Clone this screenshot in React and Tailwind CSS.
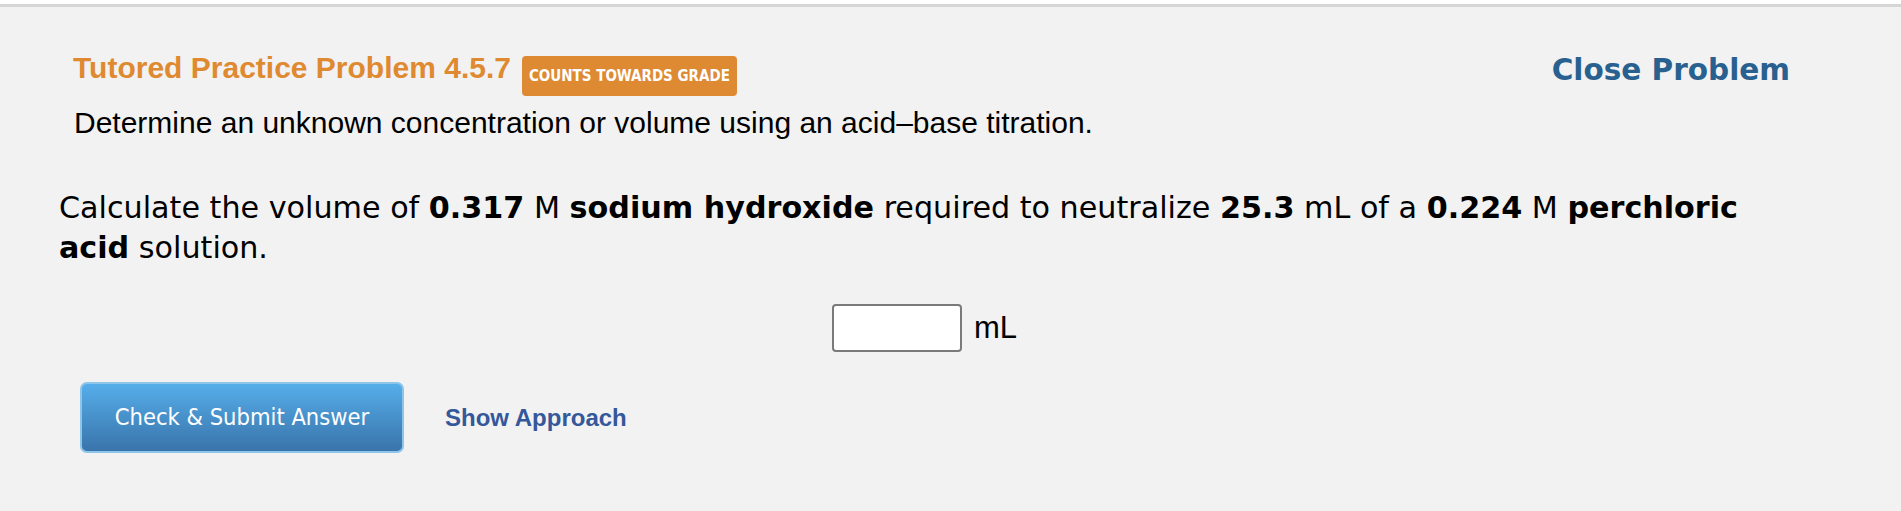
import React, { useState } from 'react';

// Tutored practice problem card (chemistry homework style)
export default function App() {
  const [answer, setAnswer] = useState('');

  return (
    <div className="min-h-[511px] bg-white pt-1">
      <div className="h-[507px] border-t-[3px] border-[#d6d6d6] bg-[#f2f2f2]">
        {/* header */}
        <div className="flex items-start justify-between pl-[73px] pr-[111px] pt-[43px]">
          <div>
            <div className="flex items-start">
              <h1 className="font-['Liberation_Sans',Arial,sans-serif] text-[30px] font-bold leading-[36px] text-[#df8a30]">
                Tutored Practice Problem 4.5.7
              </h1>
              <span className="ml-[11px] mt-[6px] flex h-[40px] items-center rounded-[4px] bg-[#de8a33] px-[7px] font-['DejaVu_Sans_Condensed','DejaVu_Sans',sans-serif] text-[15px] font-bold text-white">
                COUNTS TOWARDS GRADE
              </span>
            </div>
            <p className="mt-[9px] pl-[1px] font-['Liberation_Sans',Arial,sans-serif] text-[30px] leading-[36px] text-black">
              Determine an unknown concentration or volume using an acid–base titration.
            </p>
          </div>
          <a href="#" className="mt-[2px] font-['DejaVu_Sans',Verdana,sans-serif] text-[29.5px] font-bold leading-[36px] text-[#28608f]">
            Close Problem
          </a>
        </div>

        {/* question body */}
        <div className="pl-[59px] pr-[111px] pt-[47px]">
          <p className="font-['DejaVu_Sans',Verdana,sans-serif] text-[30.2px] leading-[40px] text-black">
            Calculate the volume of <b>0.317</b> M <b>sodium hydroxide</b> required to neutralize <b>25.3</b> mL of a <b>0.224</b> M <b>perchloric acid</b> solution.
          </p>

          <div className="mt-[36px] flex items-center justify-center gap-[12px]">
            <input
              type="text"
              value={answer}
              onChange={e => setAnswer(e.target.value)}
              className="h-[48px] w-[130px] rounded-[4px] border-2 border-[#7a7a7a] bg-white px-2 text-[26px] outline-none"
            />
            <span className="font-['Liberation_Sans',Arial,sans-serif] text-[31px] leading-[36px] text-black">mL</span>
          </div>

          <div className="mt-[30px] flex items-center pl-[21px]">
            <button className="h-[71px] w-[324px] rounded-[7px] border-2 border-[#8cc4ea] bg-gradient-to-b from-[#55aeea] to-[#3a74ab] font-['DejaVu_Sans_Condensed','DejaVu_Sans',sans-serif] text-[23.5px] text-white">
              Check &amp; Submit Answer
            </button>
            <a href="#" className="ml-[41px] font-['Liberation_Sans',Arial,sans-serif] text-[24px] font-bold text-[#35589a]">
              Show Approach
            </a>
          </div>
        </div>
      </div>
    </div>
  );
}
